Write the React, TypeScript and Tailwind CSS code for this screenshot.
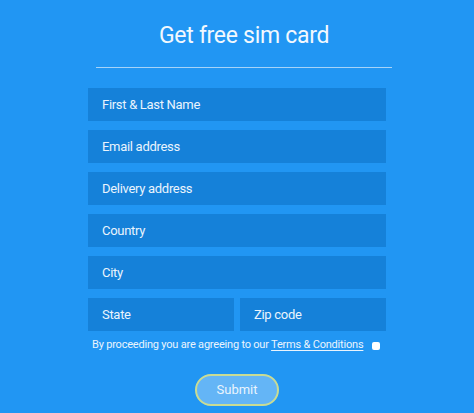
import React from 'react';

const fields = ['First & Last Name', 'Email address', 'Delivery address', 'Country', 'City'];

const Field: React.FC<{ label: string; className?: string }> = ({ label, className = '' }) => (
  <div
    className={`h-[33px] bg-[#1581d9] flex items-center pl-[14px] text-[13px] tracking-[-0.3px] text-[#eaf4fd] ${className}`}
  >
    {label}
  </div>
);

const App: React.FC = () => {
  return (
    <div className="w-[474px] h-[413px] bg-[#2196f3] flex flex-col items-center font-['Roboto',sans-serif] overflow-hidden">
      <h1 className="self-start ml-[159px] mt-[20px] text-[23px] leading-[32px] tracking-[-0.3px] text-[#f2f8fe]">
        Get free sim card
      </h1>

      {/* divider under the heading */}
      <div className="self-start ml-[96px] mt-[15px] w-[296px] border-t border-[#a6d3f8]" />

      <form className="mt-[20px] w-[298px] flex flex-col gap-[9px]">
        {fields.map((f) => (
          <Field key={f} label={f} />
        ))}
        <div className="flex gap-[6px]">
          <Field label="State" className="w-[146px]" />
          <Field label="Zip code" className="flex-1" />
        </div>
      </form>

      <div className="mt-[6px] w-[298px] flex items-center text-[11px] leading-[16px] tracking-[-0.2px] text-[#eaf4fd] pl-[4px] whitespace-nowrap">
        <span>
          By proceeding you are agreeing to our{' '}
          <span className="underline underline-offset-2">Terms &amp; Conditions</span>
        </span>
        <span className="ml-[9px] mt-[2px] w-[8px] h-[8px] bg-white rounded-[2px]" />
      </div>

      <button
        type="button"
        className="mt-[21px] w-[84px] h-[32px] rounded-full border-2 border-[#c9dc94] bg-[#64b5f6] text-[13px] text-[#eaf4fd]"
      >
        Submit
      </button>
    </div>
  );
};

export default App;
